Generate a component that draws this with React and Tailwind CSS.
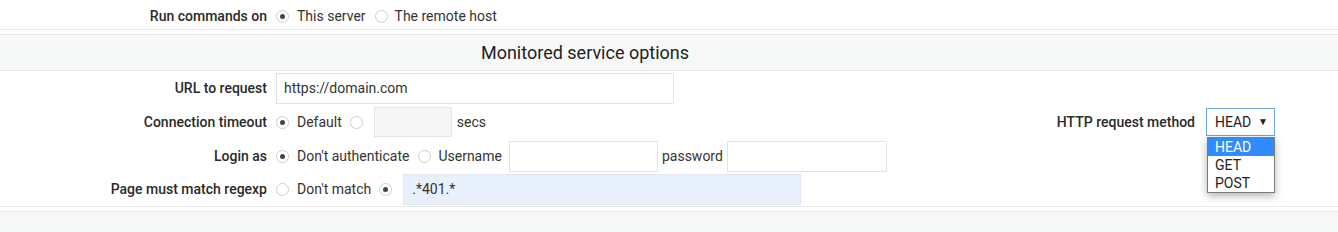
import React from 'react';

function Radio({ checked }) {
  return (
    <span className="w-[13px] h-[13px] rounded-full border border-[#cfcfcf] bg-white flex items-center justify-center shrink-0">
      {checked && <span className="w-[5px] h-[5px] rounded-full bg-[#444]" />}
    </span>
  );
}

function Row({ label, className = 'h-[34px]', children, right }) {
  return (
    <div className={`flex items-center ${className}`}>
      <div className="w-[267px] text-right font-medium text-[#2a2a2a] shrink-0">{label}</div>
      <div className="pl-[9px] flex items-center">{children}</div>
      {right && <div className="ml-auto pr-[63px] flex items-center">{right}</div>}
    </div>
  );
}

function SectionHeader({ title }) {
  return (
    <div className="border-t border-b border-[#e8e8e8] bg-[#f7f8f8] h-[37px] flex items-center">
      <div className="w-[1170px] text-center text-[18px] text-[#222]">{title}</div>
    </div>
  );
}

export default function App() {
  return (
    <div className="w-[1338px] h-[232px] overflow-hidden bg-white text-[14px] text-[#333] font-['Roboto',sans-serif]">
      <div className="border-b border-[#e8e8e8]">
        <div className="-mt-[19px] h-[22px] flex items-center overflow-hidden">
          <div className="w-[267px] shrink-0" />
          <div className="pl-[9px] whitespace-nowrap">g&nbsp;&nbsp;&nbsp;&nbsp;&nbsp;&nbsp;&nbsp;&nbsp;&nbsp;&nbsp;&nbsp;&nbsp;&nbsp;&nbsp;&nbsp;&nbsp;&nbsp;&nbsp;&nbsp;y</div>
        </div>
        <Row label="Run commands on" className="h-[26px]">
          <Radio checked />
          <span className="ml-[8px]">This server</span>
          <span className="ml-[9px]"><Radio /></span>
          <span className="ml-[7px]">The remote host</span>
        </Row>
      </div>

      <div className="mt-[4px]">
        <SectionHeader title="Monitored service options" />
        <div className="border-b border-[#e8e8e8]">
          <Row label="URL to request">
            <div className="w-[398px] h-[31px] border border-[#e3e3e3] bg-white flex items-center pl-[7px]">
              https://domain.com
            </div>
          </Row>
          <Row
            label="Connection timeout"
            right={
              <>
                <span className="font-medium text-[#2a2a2a]">HTTP request method</span>
                <div className="relative ml-[11px]">
                  <div className="w-[69px] h-[28px] border border-[#6ea6dc] bg-white flex items-center pl-[8px] pr-[6px] text-[#222]">
                    <span>HEAD</span>
                    <span className="ml-auto text-[10px] leading-none">▼</span>
                  </div>
                  <div className="absolute top-[29px] left-[1px] w-[68px] border border-[#7a7a7a] bg-white shadow-[0_3px_8px_rgba(0,0,0,0.3)] z-10">
                    <div className="h-[18px] bg-[#2f8cff] text-white pl-[7px] leading-[18px]">HEAD</div>
                    <div className="h-[18px] text-[#222] pl-[7px] leading-[18px]">GET</div>
                    <div className="h-[18px] text-[#222] pl-[7px] leading-[18px]">POST</div>
                  </div>
                </div>
              </>
            }
          >
            <Radio checked />
            <span className="ml-[8px]">Default</span>
            <span className="ml-[8px]"><Radio /></span>
            <div className="ml-[11px] w-[78px] h-[30px] border border-[#e6e6e6] bg-[#f7f7f7]" />
            <span className="ml-[5px]">secs</span>
          </Row>
          <Row label="Login as">
            <Radio checked />
            <span className="ml-[8px]">Don't authenticate</span>
            <span className="ml-[9px]"><Radio /></span>
            <span className="ml-[7px]">Username</span>
            <div className="ml-[7px] w-[149px] h-[31px] border border-[#e3e3e3] bg-white" />
            <span className="ml-[4px]">password</span>
            <div className="ml-[4px] w-[160px] h-[31px] border border-[#e3e3e3] bg-white" />
          </Row>
          <Row label="Page must match regexp" className="h-[33px]">
            <Radio />
            <span className="ml-[8px]">Don't match</span>
            <span className="ml-[8px]"><Radio checked /></span>
            <div className="ml-[11px] w-[398px] h-[31px] border border-[#e1e8f3] bg-[#e8f0fb] flex items-center pl-[8px]">
              .*401.*
            </div>
          </Row>
        </div>
      </div>

      <div className="mt-[4px] border-t border-[#e8e8e8] bg-[#f7f8f8] h-[40px]" />
    </div>
  );
}
